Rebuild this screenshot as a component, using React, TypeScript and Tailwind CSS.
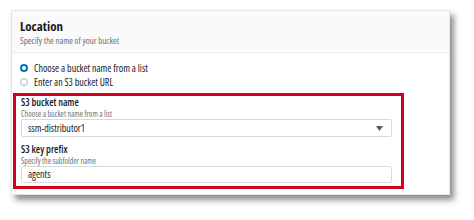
import React from "react";

export default function App() {
  return (
    <div className="w-[474px] h-[220px] bg-white pl-[11px] pt-[10px] font-['Open_Sans','Noto_Sans',sans-serif] [font-stretch:75%]">
      <div className="w-[439px] h-[185px] bg-white border border-[#e4e6e6] shadow-[4px_5px_6px_rgba(0,0,0,0.45)] flex flex-col">
        <div className="h-[42px] bg-[#fafafa] border-b border-[#eaeded] px-[8px] pt-[7px] flex flex-col">
          <div className="text-[13px] leading-[17px] font-bold text-[#16191f]">Location</div>
          <div className="text-[9px] leading-[11px] text-[#687078]">
            Specify the name of your bucket
          </div>
        </div>
        <div className="flex flex-col pt-[10px]">
          <div className="flex flex-col gap-[4px] pl-[8px]">
            <div className="flex items-center h-[10px] gap-[6px]">
              <div className="w-[8px] h-[8px] rounded-full border-[2.5px] border-[#0073bb] bg-white" />
              <span className="text-[10px] leading-[10px] text-[#16191f]">Choose a bucket name from a list</span>
            </div>
            <div className="flex items-center h-[10px] gap-[6px]">
              <div className="w-[8px] h-[8px] rounded-full border border-[#aab7b8] bg-white" />
              <span className="text-[10px] leading-[10px] text-[#16191f]">Enter an S3 bucket URL</span>
            </div>
          </div>
          <div className="ml-[1px] mt-[6px] w-[391px] h-[96px] border-[3px] border-[#d0021b] pl-[5px] pr-[9px] flex flex-col">
            <div className="text-[10px] leading-[12px] font-semibold text-[#16191f]">S3 bucket name</div>
            <div className="text-[8px] leading-[11px] text-[#687078]">Choose a bucket name from a list</div>
            <div className="h-[18px] border border-[#d5dbdb] rounded-[2px] flex items-center justify-between pl-[6px] pr-[8px]">
              <span className="text-[10px] text-[#16191f]">ssm-distributor1</span>
              <svg width="7" height="5" viewBox="0 0 7 5">
                <path d="M0 0 L7 0 L3.5 5 Z" fill="#545b64" />
              </svg>
            </div>
            <div className="mt-[6px] text-[10px] leading-[12px] font-semibold text-[#16191f]">S3 key prefix</div>
            <div className="text-[8px] leading-[11px] text-[#687078]">Specify the subfolder name</div>
            <div className="h-[17px] border border-[#d5dbdb] rounded-[2px] flex items-center pl-[6px]">
              <span className="text-[10px] text-[#16191f]">agents</span>
            </div>
          </div>
        </div>
      </div>
    </div>
  );
}
